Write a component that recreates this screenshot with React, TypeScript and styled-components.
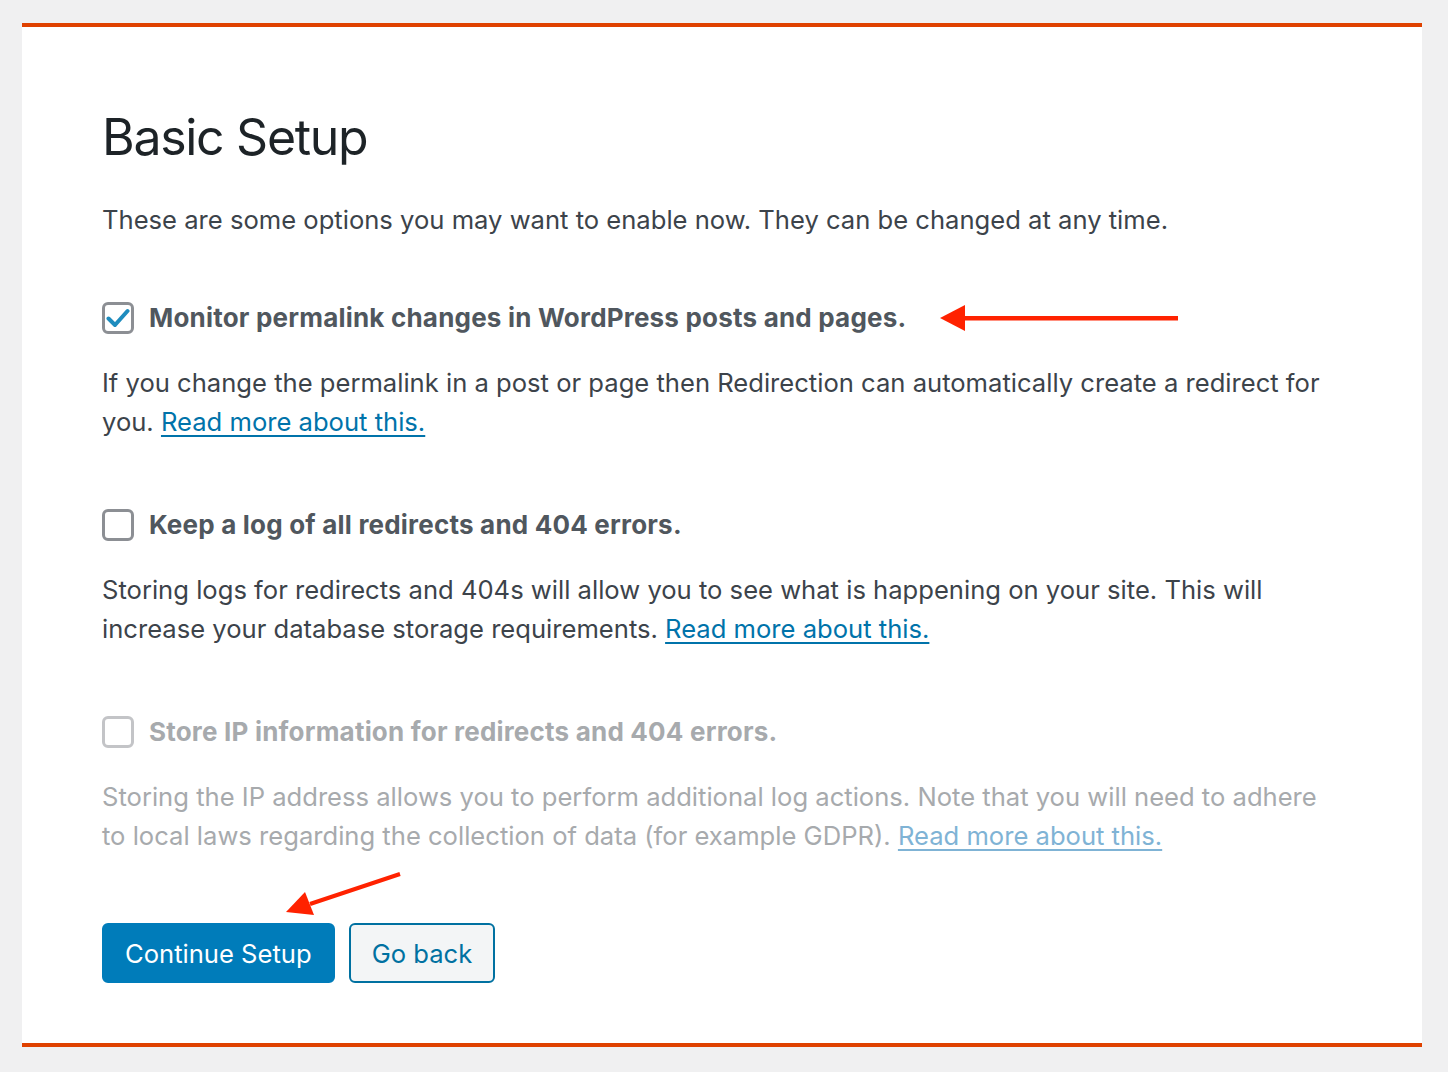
import React from "react";
import styled, { createGlobalStyle } from "styled-components";

const GlobalStyle = createGlobalStyle`
  html, body {
    margin: 0;
    padding: 0;
    background: #f0f0f1;
  }
  body {
    font-family: Inter, "Noto Sans", "Liberation Sans", sans-serif;
    -webkit-font-smoothing: antialiased;
  }
`;

const Page = styled.div`
  padding: 23px 26px 25px 22px;
`;

const Panel = styled.div`
  background: #fff;
  border-top: 4px solid #df4100;
  border-bottom: 4px solid #df4100;
  padding: 78px 80px 60px 80px;
`;

const Title = styled.h1`
  margin: 0;
  font-size: 50px;
  line-height: 64px;
  font-weight: 400;
  color: #1d2327;
  letter-spacing: -1.3px;
`;

const Intro = styled.p`
  margin: 31px 0 0;
  font-size: 25.6px;
  line-height: 39px;
  color: #3c434a;
`;

const Option = styled.div`
  margin-top: 59px;
  & + & {
    margin-top: 64px;
  }
`;

const OptionRow = styled.label<{ $disabled?: boolean }>`
  display: flex;
  align-items: center;
  gap: 15px;
  height: 39px;
  font-size: 26px;
  letter-spacing: 0.2px;
  font-weight: 700;
  color: ${(p) => (p.$disabled ? "#a7aaad" : "#50575e")};
`;

const Box = styled.span<{ $disabled?: boolean }>`
  width: 32px;
  height: 32px;
  box-sizing: border-box;
  border: 3px solid ${(p) => (p.$disabled ? "#c3c4c7" : "#8c8f94")};
  border-radius: 6px;
  background: #fff;
  display: inline-flex;
  align-items: center;
  justify-content: center;
  flex-shrink: 0;
`;

const Description = styled.p<{ $disabled?: boolean }>`
  margin: 26px 0 0;
  font-size: 25.6px;
  line-height: 39px;
  color: ${(p) => (p.$disabled ? "#a7aaad" : "#3c434a")};
  padding-right: 10px;
`;

const MoreLink = styled.a<{ $disabled?: boolean }>`
  color: ${(p) => (p.$disabled ? "#7fb3d5" : "#0073aa")};
  text-decoration: underline;
  text-decoration-thickness: 2px;
  text-underline-offset: 4px;
`;

const Actions = styled.div`
  position: relative;
  display: flex;
  gap: 14px;
  margin-top: 68px;
`;

const Button = styled.button<{ $primary?: boolean }>`
  height: 60px;
  box-sizing: border-box;
  padding: 0 21px;
  border-radius: 6px;
  font-family: inherit;
  font-size: 25.6px;
  border: 2px solid ${(p) => (p.$primary ? "#007cba" : "#0071a1")};
  background: ${(p) => (p.$primary ? "#007cba" : "#f3f5f6")};
  color: ${(p) => (p.$primary ? "#fff" : "#0071a1")};
`;

const LeftArrow = styled.svg`
  margin-left: 19px;
  flex-shrink: 0;
`;

const ButtonArrow = styled.svg`
  position: absolute;
  left: 180px;
  top: -52px;
`;

const Check = () => (
  <svg width="24" height="20" viewBox="0 0 24 20">
    <path d="M2.5 10.5 L9 17 L21.5 3" fill="none" stroke="#1e8cbe" strokeWidth="4" strokeLinecap="round" strokeLinejoin="round" />
  </svg>
);

const Arrow = () => (
  <LeftArrow width="240" height="28" viewBox="0 0 240 28">
    <polygon points="0,14 25,1 25,27" fill="#ff2200" />
    <rect x="22" y="12" width="216" height="4.5" fill="#ff2200" />
  </LeftArrow>
);

type Item = {
  label: string;
  text: React.ReactNode;
  checked?: boolean;
  disabled?: boolean;
  arrow?: boolean;
};

const items: Item[] = [
  {
    label: "Monitor permalink changes in WordPress posts and pages.",
    text: "If you change the permalink in a post or page then Redirection can automatically create a redirect for you.",
    checked: true,
    arrow: true,
  },
  {
    label: "Keep a log of all redirects and 404 errors.",
    text: "Storing logs for redirects and 404s will allow you to see what is happening on your site. This will increase your database storage requirements.",
  },
  {
    label: "Store IP information for redirects and 404 errors.",
    text: "Storing the IP address allows you to perform additional log actions. Note that you will need to adhere to local laws regarding the collection of data (for example GDPR).",
    disabled: true,
  },
];

export default function App() {
  return (
    <Page>
      <GlobalStyle />
      <Panel>
        <Title>Basic Setup</Title>
        <Intro>These are some options you may want to enable now. They can be changed at any time.</Intro>
        {items.map((item) => (
          <Option key={item.label}>
            <OptionRow $disabled={item.disabled}>
              <Box $disabled={item.disabled}>{item.checked && <Check />}</Box>
              {item.label}
              {item.arrow && <Arrow />}
            </OptionRow>
            <Description $disabled={item.disabled}>
              {item.text} <MoreLink href="#" $disabled={item.disabled}>Read more about this.</MoreLink>
            </Description>
          </Option>
        ))}
        <Actions>
          <Button $primary>Continue Setup</Button>
          <Button>Go back</Button>
          <ButtonArrow width="125" height="50" viewBox="0 0 125 50">
            <line x1="118" y1="3" x2="28" y2="33" stroke="#ff2200" strokeWidth="4" />
            <polygon points="4,41 23,21 32,44" fill="#ff2200" />
          </ButtonArrow>
        </Actions>
      </Panel>
    </Page>
  );
}
